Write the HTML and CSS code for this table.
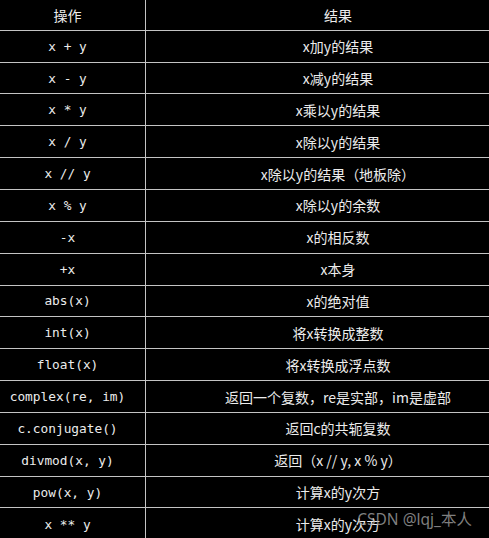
FILE: index.html
```html
<!DOCTYPE html>
<html lang="zh-CN">
<head>
<meta charset="utf-8">
<title>Python 数值运算</title>
<link rel="stylesheet" href="styles.css">
</head>
<body>
<div class="page">
  <div class="table">
    <div class="row head"><div class="op">操作</div><div class="res">结果</div></div>
    <div class="row"><div class="op">x + y</div><div class="res">x加y的结果</div></div>
    <div class="row"><div class="op">x - y</div><div class="res">x减y的结果</div></div>
    <div class="row"><div class="op">x * y</div><div class="res">x乘以y的结果</div></div>
    <div class="row"><div class="op">x / y</div><div class="res">x除以y的结果</div></div>
    <div class="row"><div class="op">x // y</div><div class="res">x除以y的结果（地板除）</div></div>
    <div class="row"><div class="op">x % y</div><div class="res">x除以y的余数</div></div>
    <div class="row"><div class="op">-x</div><div class="res">x的相反数</div></div>
    <div class="row"><div class="op">+x</div><div class="res">x本身</div></div>
    <div class="row"><div class="op">abs(x)</div><div class="res">x的绝对值</div></div>
    <div class="row"><div class="op">int(x)</div><div class="res">将x转换成整数</div></div>
    <div class="row"><div class="op">float(x)</div><div class="res">将x转换成浮点数</div></div>
    <div class="row"><div class="op">complex(re, im)</div><div class="res">返回一个复数，re是实部，im是虚部</div></div>
    <div class="row"><div class="op">c.conjugate()</div><div class="res">返回c的共轭复数</div></div>
    <div class="row"><div class="op">divmod(x, y)</div><div class="res">返回（x // y, x % y）</div></div>
    <div class="row"><div class="op">pow(x, y)</div><div class="res">计算x的y次方</div></div>
    <div class="row last"><div class="op">x ** y</div><div class="res">计算x的y次方</div></div>
  </div>
  <div class="watermark">CSDN @lqj_本人</div>
</div>
</body>
</html>
```
FILE: styles.css
```css
html, body {
  margin: 0;
  padding: 0;
  background: #000;
  overflow: hidden;
}
.page {
  position: relative;
  width: 489px;
  height: 538px;
  overflow: hidden;
  background: #000;
}
.table {
  margin-left: -10px;
  width: 540px;
  display: flex;
  flex-direction: column;
}
.row {
  display: flex;
  height: 31.85px;
  box-sizing: border-box;
  border-bottom: 1.6px solid #c4c4c4;
}
.row.head {
  height: 30.8px;
}
.row.last {
  border-bottom: none;
}
.op, .res {
  display: flex;
  align-items: center;
  justify-content: center;
  color: #ececec;
  white-space: nowrap;
}
.op {
  width: 156px;
  box-sizing: border-box;
  border-right: 1.6px solid #c4c4c4;
  font-family: "DejaVu Sans Mono", "Liberation Mono", monospace;
  font-size: 12.8px;
}
.res {
  flex: 1;
  font-family: "Noto Sans CJK SC", "Noto Sans", sans-serif;
  font-size: 14px;
}
.head .op, .head .res {
  font-family: "Noto Sans CJK SC", sans-serif;
  font-size: 14px;
}
.watermark {
  position: absolute;
  right: 17px;
  top: 507px;
  font-family: "Noto Sans", "Noto Sans CJK SC", sans-serif;
  font-size: 15.5px;
  color: rgba(170, 170, 170, 0.75);
  white-space: nowrap;
}
```
